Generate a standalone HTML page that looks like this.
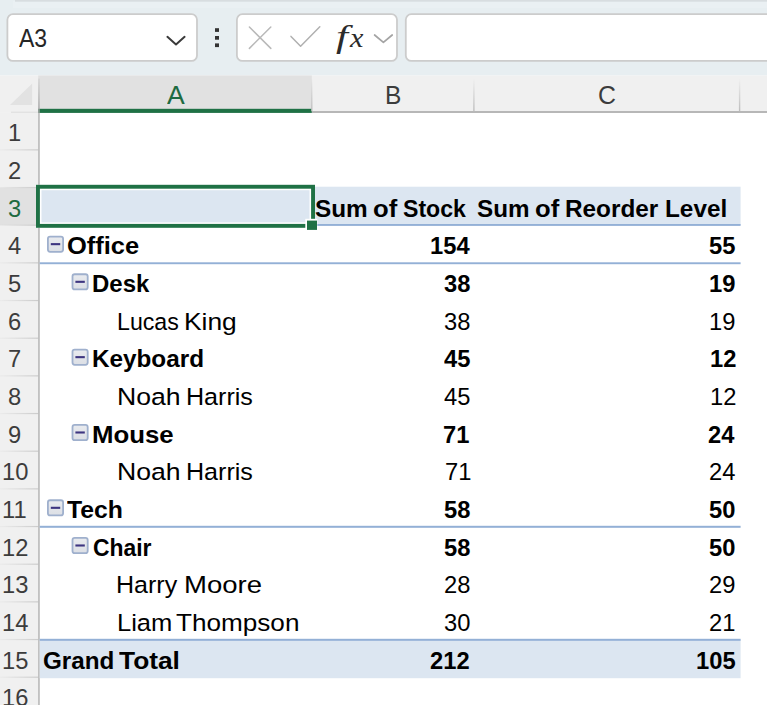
<!DOCTYPE html>
<html><head><meta charset="utf-8"><title>Pivot</title>
<style>
html,body{margin:0;padding:0}
body{width:767px;height:705px;position:relative;overflow:hidden;background:#fff;font-family:"Liberation Sans",sans-serif}
span,svg{position:absolute}
.t{white-space:nowrap;line-height:30px;transform-origin:0 50%;color:#000}
</style></head><body>
<svg style="left:0;top:0" width="767" height="705" viewBox="0 0 767 705"><defs>
<linearGradient id="sg" x1="0" y1="0" x2="0" y2="1"><stop offset="0" stop-color="#c0c0c0" stop-opacity="0"/><stop offset="1" stop-color="#bdbdbd"/></linearGradient>
<linearGradient id="vg" x1="0" y1="0" x2="0" y2="1"><stop offset="0" stop-color="#b0b0b0" stop-opacity=".25"/><stop offset="1" stop-color="#a2a2a2"/></linearGradient>
<linearGradient id="rg" x1="0" y1="0" x2="1" y2="0"><stop offset="0" stop-color="#d0d0d0" stop-opacity=".15"/><stop offset="1" stop-color="#cbcbcb"/></linearGradient>
<linearGradient id="bg" x1="0" y1="0" x2="0" y2="1"><stop offset="0" stop-color="#e9ebef"/><stop offset="1" stop-color="#dcdfe5"/></linearGradient>
</defs>
<rect x="0.00" y="0.00" width="767.00" height="75.50" fill="#e7eef1"/>
<rect x="13.00" y="1.20" width="754.00" height="6.80" fill="#eaf0f3"/>
<rect x="15.00" y="0.00" width="752.00" height="1.70" fill="#d8dde0"/>
<rect x="7.40" y="14.20" width="189.60" height="46.70" rx="5.5" fill="#fff" stroke="#cccccc" stroke-width="1.8"/>
<rect x="236.90" y="14.20" width="160.10" height="46.70" rx="5.5" fill="#fff" stroke="#cccccc" stroke-width="1.8"/>
<rect x="405.80" y="14.20" width="383.30" height="46.70" rx="5.5" fill="#fff" stroke="#cccccc" stroke-width="1.8"/>
<path d="M167.4 36.8 L176 44.4 L184.6 36.8" fill="none" stroke="#3a3a3a" stroke-width="2" stroke-linecap="round" stroke-linejoin="round"/>
<rect x="215.00" y="28.20" width="4.00" height="3.70" fill="#333"/>
<rect x="215.00" y="36.00" width="4.00" height="3.70" fill="#333"/>
<rect x="215.00" y="43.40" width="4.00" height="3.70" fill="#333"/>
<path d="M249.4 27 L270.8 48.4 M270.8 27 L249.4 48.4" fill="none" stroke="#b9b9b9" stroke-width="1.5" stroke-linecap="round"/>
<path d="M291 36.4 L300.6 46.2 L319.8 26.8" fill="none" stroke="#b0b0b0" stroke-width="1.5" stroke-linecap="round" stroke-linejoin="round"/>
<path d="M374.6 35 L383.4 42.4 L392.2 35" fill="none" stroke="#a4a4a4" stroke-width="1.7" stroke-linecap="round" stroke-linejoin="round"/>
<rect x="0.00" y="75.50" width="767.00" height="37.40" fill="#f0f0f0"/>
<rect x="38.20" y="75.50" width="273.60" height="37.40" fill="#e1e1e1"/>
<rect x="311.80" y="111.10" width="455.20" height="1.80" fill="#b1b1b1"/>
<rect x="11.00" y="111.70" width="27.20" height="1.20" fill="#dedede"/>
<rect x="38.20" y="108.80" width="273.60" height="4.10" fill="#1f7145"/>
<rect x="311.10" y="78.50" width="1.40" height="32.70" fill="url(#sg)"/>
<rect x="473.20" y="78.50" width="1.40" height="32.70" fill="url(#sg)"/>
<rect x="738.90" y="78.50" width="1.40" height="32.70" fill="url(#sg)"/>
<path d="M32.2 83.4 L32.2 105 L10 105 Z" fill="#e2e2e2"/>
<rect x="0.00" y="112.90" width="38.20" height="592.10" fill="#f0f0f0"/>
<rect x="0.00" y="187.63" width="38.20" height="37.57" fill="#e1e1e1"/>
<rect x="0.00" y="149.27" width="38.20" height="1.20" fill="url(#rg)"/>
<rect x="0.00" y="186.93" width="38.20" height="1.20" fill="url(#rg)"/>
<rect x="0.00" y="224.60" width="38.20" height="1.20" fill="url(#rg)"/>
<rect x="0.00" y="262.27" width="38.20" height="1.20" fill="url(#rg)"/>
<rect x="0.00" y="299.93" width="38.20" height="1.20" fill="url(#rg)"/>
<rect x="0.00" y="337.60" width="38.20" height="1.20" fill="url(#rg)"/>
<rect x="0.00" y="375.27" width="38.20" height="1.20" fill="url(#rg)"/>
<rect x="0.00" y="412.94" width="38.20" height="1.20" fill="url(#rg)"/>
<rect x="0.00" y="450.60" width="38.20" height="1.20" fill="url(#rg)"/>
<rect x="0.00" y="488.27" width="38.20" height="1.20" fill="url(#rg)"/>
<rect x="0.00" y="525.94" width="38.20" height="1.20" fill="url(#rg)"/>
<rect x="0.00" y="563.60" width="38.20" height="1.20" fill="url(#rg)"/>
<rect x="0.00" y="601.27" width="38.20" height="1.20" fill="url(#rg)"/>
<rect x="0.00" y="638.94" width="38.20" height="1.20" fill="url(#rg)"/>
<rect x="0.00" y="676.60" width="38.20" height="1.20" fill="url(#rg)"/>
<rect x="0.00" y="714.27" width="38.20" height="1.20" fill="url(#rg)"/>
<rect x="38.20" y="78.50" width="1.50" height="34.40" fill="url(#vg)"/>
<rect x="38.20" y="112.90" width="1.50" height="592.10" fill="#b2b2b2"/>
<rect x="39.70" y="186.70" width="700.90" height="38.30" fill="#dce6f1"/>
<rect x="39.70" y="639.50" width="700.90" height="38.70" fill="#dce6f1"/>
<rect x="39.70" y="224.00" width="700.90" height="1.90" fill="#93b0d6"/>
<rect x="39.70" y="262.30" width="700.90" height="1.90" fill="#93b0d6"/>
<rect x="39.70" y="525.80" width="700.90" height="2.00" fill="#93b0d6"/>
<rect x="39.70" y="638.80" width="700.90" height="2.00" fill="#93b0d6"/>
<rect x="36.00" y="184.80" width="279.00" height="43.00" fill="#fff"/>
<rect x="41.50" y="190.20" width="268.00" height="32.20" fill="#dce6f1"/>
<rect x="37.95" y="186.75" width="275.1" height="39.1" fill="none" stroke="#1f7145" stroke-width="3.9"/>
<rect x="305.30" y="218.80" width="12.00" height="12.70" fill="#fff"/>
<rect x="307.00" y="220.60" width="10.00" height="9.30" fill="#1f7145"/>
<rect x="47.90" y="236.60" width="15.2" height="15.2" rx="2.2" fill="url(#bg)" stroke="#9fb0cd" stroke-width="1.8"/>
<rect x="50.80" y="243.10" width="9.40" height="2.10" fill="#3d3580"/>
<rect x="72.50" y="274.27" width="15.2" height="15.2" rx="2.2" fill="url(#bg)" stroke="#9fb0cd" stroke-width="1.8"/>
<rect x="75.40" y="280.77" width="9.40" height="2.10" fill="#3d3580"/>
<rect x="72.50" y="349.60" width="15.2" height="15.2" rx="2.2" fill="url(#bg)" stroke="#9fb0cd" stroke-width="1.8"/>
<rect x="75.40" y="356.10" width="9.40" height="2.10" fill="#3d3580"/>
<rect x="72.50" y="424.94" width="15.2" height="15.2" rx="2.2" fill="url(#bg)" stroke="#9fb0cd" stroke-width="1.8"/>
<rect x="75.40" y="431.44" width="9.40" height="2.10" fill="#3d3580"/>
<rect x="47.90" y="500.27" width="15.2" height="15.2" rx="2.2" fill="url(#bg)" stroke="#9fb0cd" stroke-width="1.8"/>
<rect x="50.80" y="506.77" width="9.40" height="2.10" fill="#3d3580"/>
<rect x="72.50" y="537.94" width="15.2" height="15.2" rx="2.2" fill="url(#bg)" stroke="#9fb0cd" stroke-width="1.8"/>
<rect x="75.40" y="544.44" width="9.40" height="2.10" fill="#3d3580"/>
</svg>
<span class="t" style="left:314.93px;top:193.71px;font-size:24.5px;font-weight:bold;transform:scaleX(0.9930);">Sum</span>
<span class="t" style="left:373.15px;top:193.71px;font-size:24.5px;font-weight:bold;transform:scaleX(1.0470);">of</span>
<span class="t" style="left:402.79px;top:193.71px;font-size:24.5px;font-weight:bold;transform:scaleX(0.9424);">Stock</span>
<span class="t" style="left:477.06px;top:193.71px;font-size:24.5px;font-weight:bold;transform:scaleX(0.9885);">Sum</span>
<span class="t" style="left:535.26px;top:193.71px;font-size:24.5px;font-weight:bold;transform:scaleX(1.0470);">of</span>
<span class="t" style="left:565.40px;top:193.71px;font-size:24.5px;font-weight:bold;transform:scaleX(0.9928);">Reorder</span>
<span class="t" style="left:665.14px;top:193.71px;font-size:24.5px;font-weight:bold;transform:scaleX(0.9926);">Level</span>
<span class="t" style="left:67.25px;top:231.38px;font-size:24.5px;font-weight:bold;transform:scaleX(1.0398);">Office</span>
<span class="t" style="left:91.96px;top:269.04px;font-size:24.5px;font-weight:bold;transform:scaleX(0.9790);">Desk</span>
<span class="t" style="left:116.52px;top:306.71px;font-size:24.5px;transform:scaleX(0.9453);">Lucas</span>
<span class="t" style="left:183.88px;top:306.71px;font-size:24.5px;transform:scaleX(1.0761);">King</span>
<span class="t" style="left:91.57px;top:344.38px;font-size:24.5px;font-weight:bold;transform:scaleX(0.9910);">Keyboard</span>
<span class="t" style="left:116.53px;top:382.05px;font-size:24.5px;transform:scaleX(1.0855);">Noah</span>
<span class="t" style="left:185.69px;top:382.05px;font-size:24.5px;transform:scaleX(1.0239);">Harris</span>
<span class="t" style="left:91.98px;top:419.71px;font-size:24.5px;font-weight:bold;transform:scaleX(1.0532);">Mouse</span>
<span class="t" style="left:116.53px;top:457.38px;font-size:24.5px;transform:scaleX(1.0855);">Noah</span>
<span class="t" style="left:185.69px;top:457.38px;font-size:24.5px;transform:scaleX(1.0239);">Harris</span>
<span class="t" style="left:67.42px;top:495.05px;font-size:24.5px;font-weight:bold;transform:scaleX(1.0106);">Tech</span>
<span class="t" style="left:92.69px;top:532.71px;font-size:24.5px;font-weight:bold;transform:scaleX(0.9341);">Chair</span>
<span class="t" style="left:116.11px;top:570.38px;font-size:24.5px;transform:scaleX(1.0216);">Harry</span>
<span class="t" style="left:184.13px;top:570.38px;font-size:24.5px;transform:scaleX(1.1228);">Moore</span>
<span class="t" style="left:116.67px;top:608.05px;font-size:24.5px;transform:scaleX(1.0421);">Liam</span>
<span class="t" style="left:176.28px;top:608.05px;font-size:24.5px;transform:scaleX(1.0662);">Thompson</span>
<span class="t" style="left:42.81px;top:645.71px;font-size:24.5px;font-weight:bold;transform:scaleX(0.9888);">Grand</span>
<span class="t" style="left:118.82px;top:645.71px;font-size:24.5px;font-weight:bold;transform:scaleX(1.0747);">Total</span>
<span class="t" style="left:429.58px;top:231.32px;font-size:23.5px;font-weight:bold;transform:scaleX(1.0099);">154</span>
<span class="t" style="left:709.10px;top:231.32px;font-size:23.5px;font-weight:bold;transform:scaleX(1.0099);">55</span>
<span class="t" style="left:444.06px;top:268.99px;font-size:23.5px;font-weight:bold;transform:scaleX(1.0099);">38</span>
<span class="t" style="left:709.46px;top:268.99px;font-size:23.5px;font-weight:bold;transform:scaleX(1.0099);">19</span>
<span class="t" style="left:444.14px;top:306.66px;font-size:23.5px;transform:scaleX(1.0099);">38</span>
<span class="t" style="left:709.38px;top:306.66px;font-size:23.5px;transform:scaleX(1.0099);">19</span>
<span class="t" style="left:443.50px;top:344.33px;font-size:23.5px;font-weight:bold;transform:scaleX(1.0099);">45</span>
<span class="t" style="left:709.86px;top:344.33px;font-size:23.5px;font-weight:bold;transform:scaleX(1.0099);">12</span>
<span class="t" style="left:443.90px;top:381.99px;font-size:23.5px;transform:scaleX(1.0099);">45</span>
<span class="t" style="left:709.62px;top:381.99px;font-size:23.5px;transform:scaleX(1.0099);">12</span>
<span class="t" style="left:443.42px;top:419.66px;font-size:23.5px;font-weight:bold;transform:scaleX(1.0099);">71</span>
<span class="t" style="left:708.22px;top:419.66px;font-size:23.5px;font-weight:bold;transform:scaleX(1.0099);">24</span>
<span class="t" style="left:444.78px;top:457.33px;font-size:23.5px;transform:scaleX(1.0099);">71</span>
<span class="t" style="left:709.26px;top:457.33px;font-size:23.5px;transform:scaleX(1.0099);">24</span>
<span class="t" style="left:444.06px;top:494.99px;font-size:23.5px;font-weight:bold;transform:scaleX(1.0099);">58</span>
<span class="t" style="left:709.26px;top:494.99px;font-size:23.5px;font-weight:bold;transform:scaleX(1.0099);">50</span>
<span class="t" style="left:444.06px;top:532.66px;font-size:23.5px;font-weight:bold;transform:scaleX(1.0099);">58</span>
<span class="t" style="left:709.26px;top:532.66px;font-size:23.5px;font-weight:bold;transform:scaleX(1.0099);">50</span>
<span class="t" style="left:444.14px;top:570.33px;font-size:23.5px;transform:scaleX(1.0099);">28</span>
<span class="t" style="left:709.38px;top:570.33px;font-size:23.5px;transform:scaleX(1.0099);">29</span>
<span class="t" style="left:444.18px;top:607.99px;font-size:23.5px;transform:scaleX(1.0099);">30</span>
<span class="t" style="left:709.38px;top:607.99px;font-size:23.5px;transform:scaleX(1.0099);">21</span>
<span class="t" style="left:430.46px;top:645.66px;font-size:23.5px;font-weight:bold;transform:scaleX(1.0099);">212</span>
<span class="t" style="left:695.86px;top:645.66px;font-size:23.5px;font-weight:bold;transform:scaleX(1.0099);">105</span>
<span class="t" style="left:7.70px;top:118.38px;font-size:24.5px;color:#3c3c3c;transform:scaleX(0.9687);">1</span>
<span class="t" style="left:7.70px;top:156.04px;font-size:24.5px;color:#3c3c3c;transform:scaleX(0.9687);">2</span>
<span class="t" style="left:7.70px;top:193.71px;font-size:24.5px;color:#1e6b41;transform:scaleX(0.9687);">3</span>
<span class="t" style="left:7.70px;top:231.38px;font-size:24.5px;color:#3c3c3c;transform:scaleX(0.9687);">4</span>
<span class="t" style="left:7.70px;top:269.04px;font-size:24.5px;color:#3c3c3c;transform:scaleX(0.9687);">5</span>
<span class="t" style="left:7.70px;top:306.71px;font-size:24.5px;color:#3c3c3c;transform:scaleX(0.9687);">6</span>
<span class="t" style="left:7.70px;top:344.38px;font-size:24.5px;color:#3c3c3c;transform:scaleX(0.9687);">7</span>
<span class="t" style="left:7.70px;top:382.05px;font-size:24.5px;color:#3c3c3c;transform:scaleX(0.9687);">8</span>
<span class="t" style="left:7.70px;top:419.71px;font-size:24.5px;color:#3c3c3c;transform:scaleX(0.9687);">9</span>
<span class="t" style="left:2.20px;top:457.38px;font-size:24.5px;color:#3c3c3c;transform:scaleX(0.9687);">10</span>
<span class="t" style="left:2.20px;top:495.05px;font-size:24.5px;color:#3c3c3c;transform:scaleX(0.9687);">11</span>
<span class="t" style="left:2.20px;top:532.71px;font-size:24.5px;color:#3c3c3c;transform:scaleX(0.9687);">12</span>
<span class="t" style="left:2.20px;top:570.38px;font-size:24.5px;color:#3c3c3c;transform:scaleX(0.9687);">13</span>
<span class="t" style="left:2.20px;top:608.05px;font-size:24.5px;color:#3c3c3c;transform:scaleX(0.9687);">14</span>
<span class="t" style="left:2.20px;top:645.71px;font-size:24.5px;color:#3c3c3c;transform:scaleX(0.9687);">15</span>
<span class="t" style="left:2.20px;top:683.38px;font-size:24.5px;color:#3c3c3c;transform:scaleX(0.9687);">16</span>
<span class="t" style="left:18.59px;top:23.32px;font-size:26.5px;color:#262626;transform:scaleX(0.8681);">A3</span>
<span class="t" style="left:166.80px;top:80.04px;font-size:25px;color:#1e6b41;transform:scaleX(1.0623);">A</span>
<span class="t" style="left:385.29px;top:80.04px;font-size:25px;color:#3c3c3c;transform:scaleX(0.9802);">B</span>
<span class="t" style="left:597.50px;top:80.04px;font-size:25px;color:#3c3c3c;transform:scaleX(0.9945);">C</span>
<span class="t" style="left:336.00px;top:20.90px;font-size:32px;font-style:italic;font-family:'Liberation Serif',serif;color:#2b2b2b;transform:scaleX(1.3500);">f</span><span class="t" style="left:350.00px;top:23.29px;font-size:27px;font-style:italic;font-family:'Liberation Serif',serif;color:#2b2b2b;transform:scaleX(1.1200);">x</span>
</body></html>
